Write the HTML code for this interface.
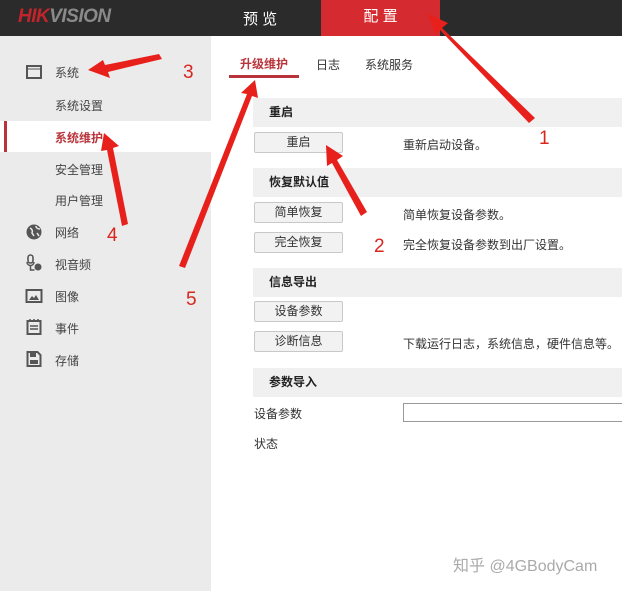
<!DOCTYPE html>
<html><head><meta charset="utf-8"><style>
*{margin:0;padding:0;box-sizing:border-box}
body{width:622px;height:591px;overflow:hidden;background:#fff;position:relative;font-family:"Liberation Sans","Noto Sans CJK SC",sans-serif;font-size:12px;color:#333}
.a{position:absolute}
.hd{left:0;top:0;width:622px;height:36px;background:#2b2b2b}
.sb{left:0;top:36px;width:211px;height:555px;background:#ebebeb}
.bar{left:253px;width:369px;height:29px;background:#f0f0f0;font-weight:bold;padding-left:16px;line-height:29px;color:#222}
.btn{left:254px;width:89px;height:21px;background:#f2f2f2;border:1px solid #c8c8c8;border-radius:2px;text-align:center;line-height:19px;color:#333}
.tx{left:403px;color:#333}
.mi{left:55px;color:#444}
.ic{left:25px;width:18px;height:18px}
</style></head><body>
<div class="a hd"></div>
<div class="a" style="left:18px;top:6px;font-size:19px;font-weight:bold;font-style:italic;letter-spacing:-0.5px"><span style="color:#c3242b">HIK</span><span style="color:#8a8a8a">VISION</span></div>
<div class="a" style="left:243px;top:8px;color:#fff;font-size:15px">预 览</div>
<div class="a" style="left:321px;top:0;width:119px;height:36px;background:#d52a2f;color:#fff;font-size:15px;text-align:center;line-height:34px">配 置</div>
<div class="a sb"></div>
<div class="a" style="left:0;top:121px;width:211px;height:31px;background:#fff"></div>
<div class="a" style="left:4px;top:121px;width:3px;height:31px;background:#b8343a"></div>
<svg class="a ic" style="top:63px" viewBox="0 0 18 18"><rect x="2" y="3" width="14" height="12" fill="none" stroke="#555" stroke-width="2"/><line x1="2" y1="6" x2="16" y2="6" stroke="#555" stroke-width="1"/></svg>
<div class="a mi" style="top:64px">系统</div>
<div class="a mi" style="top:97px">系统设置</div>
<div class="a mi" style="top:129px;color:#b8343a;font-weight:bold">系统维护</div>
<div class="a mi" style="top:161px">安全管理</div>
<div class="a mi" style="top:192px">用户管理</div>
<svg class="a ic" style="top:223px" viewBox="0 0 18 18"><circle cx="9" cy="9" r="7.5" fill="#555"/><path d="M5 5c2 1 3 3 2 5l2 3M11 3c0 2 2 3 4 3M12 10l2 3" stroke="#ebebeb" stroke-width="1.5" fill="none"/></svg>
<div class="a mi" style="top:224px">网络</div>
<svg class="a ic" style="top:254px" viewBox="0 0 18 18"><rect x="3" y="1" width="5" height="8" rx="2.5" fill="none" stroke="#555" stroke-width="1.6"/><path d="M2 8a3.5 3.5 0 0 0 7 0M5.5 12v4h4" stroke="#555" stroke-width="1.5" fill="none"/><circle cx="13" cy="13" r="3.5" fill="#555"/></svg>
<div class="a mi" style="top:256px">视音频</div>
<svg class="a ic" style="top:287px" viewBox="0 0 18 18"><rect x="1.5" y="3" width="15" height="12" fill="none" stroke="#555" stroke-width="2"/><path d="M4 13l3-4 2 2 2-3 3 5z" fill="#555"/></svg>
<div class="a mi" style="top:288px">图像</div>
<svg class="a ic" style="top:318px" viewBox="0 0 18 18"><rect x="2.5" y="3" width="13" height="13" fill="none" stroke="#555" stroke-width="2"/><path d="M5 1v3M9 1v3M13 1v3M5 8h8M5 11h8" stroke="#555" stroke-width="1.5"/></svg>
<div class="a mi" style="top:320px">事件</div>
<svg class="a ic" style="top:350px" viewBox="0 0 18 18"><path d="M2.5 2h10l3 3v11h-13z" fill="none" stroke="#555" stroke-width="2"/><rect x="5" y="3" width="6" height="4" fill="#555"/><rect x="5" y="10" width="8" height="4" fill="#555"/></svg>
<div class="a mi" style="top:352px">存储</div>

<div class="a" style="left:240px;top:55px;color:#b8343a;font-weight:bold">升级维护</div>
<div class="a" style="left:229px;top:75px;width:70px;height:3px;background:#b8343a"></div>
<div class="a" style="left:316px;top:56px">日志</div>
<div class="a" style="left:365px;top:56px">系统服务</div>

<div class="a bar" style="top:98px">重启</div>
<div class="a btn" style="top:132px">重启</div>
<div class="a tx" style="top:136px">重新启动设备。</div>
<div class="a bar" style="top:168px">恢复默认值</div>
<div class="a btn" style="top:202px">简单恢复</div>
<div class="a tx" style="top:206px">简单恢复设备参数。</div>
<div class="a btn" style="top:232px">完全恢复</div>
<div class="a tx" style="top:236px">完全恢复设备参数到出厂设置。</div>
<div class="a bar" style="top:268px">信息导出</div>
<div class="a btn" style="top:301px">设备参数</div>
<div class="a btn" style="top:331px">诊断信息</div>
<div class="a tx" style="top:335px">下载运行日志，系统信息，硬件信息等。</div>
<div class="a bar" style="top:368px">参数导入</div>
<div class="a" style="left:254px;top:405px">设备参数</div>
<div class="a" style="left:403px;top:403px;width:220px;height:19px;border:1px solid #999;background:#fff"></div>
<div class="a" style="left:254px;top:435px">状态</div>

<div class="a" style="left:453px;top:552px;color:#aaa;font-size:16px">知乎 @4GBodyCam</div>

<svg class="a" style="left:0;top:0" width="622" height="591" viewBox="0 0 622 591">
<g fill="#e8201c">
<polygon points="159,54 162,59 108,72 110,78 88,70 103,60 105,65"/>
<polygon points="529,123 535,118 442,28 448,23 428,14 435,34 440,30"/>
<polygon points="361,216 367,212 337,160 343,156 326,145 327,166 332,163"/>
<polygon points="122,226 128,224 113,148 119,146 104,133 101,151 107,150"/>
<polygon points="179,266 185,268 252,96 258,98 255,80 241,93 247,94"/>
</g>
<g fill="#d8261f" font-family="Liberation Sans,sans-serif" font-size="19">
<text x="183" y="78">3</text>
<text x="539" y="144">1</text>
<text x="374" y="252">2</text>
<text x="107" y="241">4</text>
<text x="186" y="305">5</text>
</g>
</svg>
</body></html>
